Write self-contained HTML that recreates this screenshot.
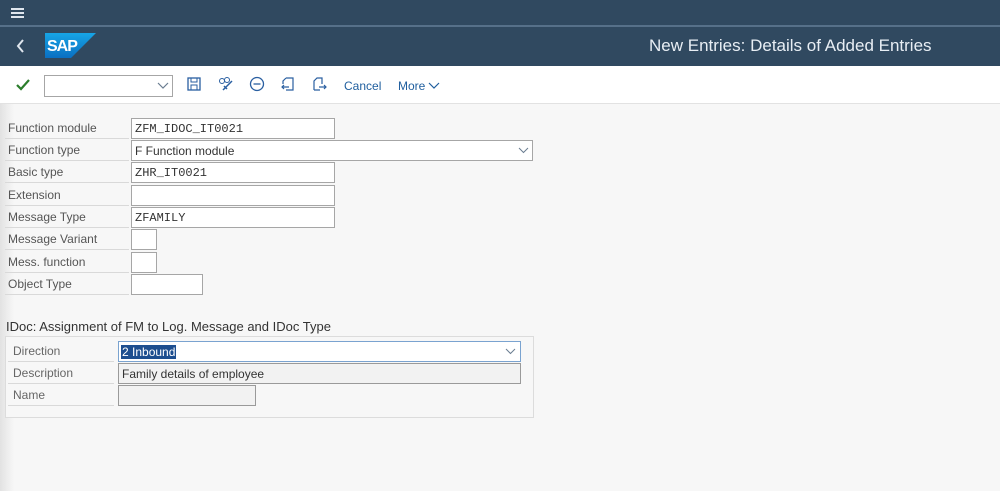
<!DOCTYPE html>
<html><head><style>
*{margin:0;padding:0;box-sizing:border-box}
body{width:1000px;height:491px;overflow:hidden;background:#f7f7f7;font-family:"Liberation Sans",sans-serif;position:relative}
.a{position:absolute}
.lbl{position:absolute;left:5px;width:124px;height:21px;border-bottom:1px solid #d9d9d9;font-size:12px;color:#555;padding:3px 0 0 3px}
.inp{position:absolute;height:21px;background:#fff;border:1px solid #a6a6a6;font-size:12px;color:#333;padding:3px 0 0 3px}
.mono{font-family:"Liberation Mono",monospace;font-size:12px}
.ic{position:absolute;top:76px}
.g{position:absolute;left:8px;width:106px;height:21px;border-bottom:1px solid #d9d9d9;font-size:12px;color:#666;padding:3px 0 0 5px}
</style></head><body>
<div class="a" style="left:0;top:0;width:1000px;height:66px;background:#304960"></div>
<div class="a" style="left:0;top:25px;width:1000px;height:2px;background:#567089"></div>
<div class="a" style="left:11px;top:8px;width:13px;height:2px;background:#dfe6ee;box-shadow:0 4px 0 #dfe6ee,0 8px 0 #dfe6ee"></div>
<svg class="a" style="left:15px;top:38px" width="10" height="16"><path d="M8 2 L3 8 L8 14" stroke="#dfe6ee" stroke-width="2" fill="none"/></svg>
<svg class="a" style="left:45px;top:33px" width="51" height="25"><defs><linearGradient id="s" x1="0" y1="0" x2="0" y2="1"><stop offset="0" stop-color="#17a5e6"/><stop offset="1" stop-color="#0a6fc2"/></linearGradient></defs><path d="M0 0 H51 L26 25 H0 Z" fill="url(#s)"/><text x="2" y="18" font-family="Liberation Sans" font-weight="bold" font-size="16" fill="#fff" letter-spacing="-1">SAP</text></svg>
<div class="a" style="left:649px;top:36px;font-size:17px;color:#e8eef4">New Entries: Details of Added Entries</div>
<div class="a" style="left:0;top:66px;width:1000px;height:38px;background:#fff;border-bottom:1px solid #e2e2e2"></div>
<svg class="a" style="left:16px;top:79px" width="14" height="12"><path d="M1 6 L5 10 L13 1" stroke="#2b7d2b" stroke-width="2.2" fill="none"/></svg>
<div class="a" style="left:44px;top:75px;width:129px;height:22px;border:1px solid #a6a6a6;background:#fff"></div>
<svg class="a" style="left:157px;top:82px" width="12" height="8"><path d="M1 1 L6 6 L11 1" stroke="#6a7d91" stroke-width="1.2" fill="none"/></svg>
<svg class="ic" style="left:187px" width="14" height="16"><rect x="1" y="2" width="12" height="12" stroke="#2a5fa1" fill="none" stroke-width="1.3"/><rect x="4" y="2" width="6" height="4" stroke="#2a5fa1" fill="none"/><rect x="4" y="9" width="6" height="5" stroke="#2a5fa1" fill="none"/></svg>
<svg class="ic" style="left:218px" width="16" height="16"><circle cx="4" cy="5" r="2.5" stroke="#2a5fa1" fill="none"/><circle cx="9" cy="4" r="2.5" stroke="#2a5fa1" fill="none"/><path d="M5 14 L14 5 M6 10 L9 13" stroke="#2a5fa1" stroke-width="1.5"/></svg>
<svg class="ic" style="left:249px" width="16" height="16"><circle cx="8" cy="8" r="6.5" stroke="#2a5fa1" fill="none" stroke-width="1.3"/><path d="M4.5 8 H11.5" stroke="#2a5fa1" stroke-width="1.3"/></svg>
<svg class="ic" style="left:280px" width="16" height="16"><path d="M6 2 H13 V14 H6 M6 2 L3 5 V8" stroke="#2a5fa1" fill="none" stroke-width="1.2"/><path d="M9 11 H2 M4 9 L2 11 L4 13" stroke="#2a5fa1" fill="none" stroke-width="1.2"/></svg>
<svg class="ic" style="left:311px" width="16" height="16"><path d="M3 14 V5 L6 2 H11 V8 M3 14 H9" stroke="#2a5fa1" fill="none" stroke-width="1.2"/><path d="M8 11 H15 M13 9 L15 11 L13 13" stroke="#2a5fa1" fill="none" stroke-width="1.2"/></svg>
<div class="a" style="left:344px;top:79px;font-size:12px;color:#1f5e9e">Cancel</div>
<div class="a" style="left:398px;top:79px;font-size:12px;color:#1f5e9e">More</div>
<svg class="a" style="left:428px;top:82px" width="12" height="8"><path d="M1 1 L6 6 L11 1" stroke="#1f5e9e" stroke-width="1.2" fill="none"/></svg>
<div class="a" style="left:0;top:104px;width:14px;height:387px;background:linear-gradient(90deg,#e2e2e2,#f7f7f7)"></div>

<div class="lbl" style="top:118px">Function module</div><div class="inp mono" style="left:131px;top:118px;width:204px">ZFM_IDOC_IT0021</div>
<div class="lbl" style="top:140px">Function type</div><div class="inp" style="left:131px;top:140px;width:402px">F Function module</div>
<svg class="a" style="left:518px;top:147px" width="11" height="7"><path d="M1 1 L5.5 5.5 L10 1" stroke="#6a7d91" fill="none"/></svg>
<div class="lbl" style="top:162px">Basic type</div><div class="inp mono" style="left:131px;top:162px;width:204px">ZHR_IT0021</div>
<div class="lbl" style="top:185px">Extension</div><div class="inp" style="left:131px;top:185px;width:204px"></div>
<div class="lbl" style="top:207px">Message Type</div><div class="inp mono" style="left:131px;top:207px;width:204px">ZFAMILY</div>
<div class="lbl" style="top:229px">Message Variant</div><div class="inp" style="left:131px;top:229px;width:26px"></div>
<div class="lbl" style="top:252px">Mess. function</div><div class="inp" style="left:131px;top:252px;width:26px"></div>
<div class="lbl" style="top:274px">Object Type</div><div class="inp" style="left:131px;top:274px;width:72px"></div>

<div class="a" style="left:6px;top:319px;font-size:13px;color:#333">IDoc: Assignment of FM to Log. Message and IDoc Type</div>
<div class="a" style="left:5px;top:336px;width:529px;height:82px;border:1px solid #dcdcdc;background:#f7f7f7"></div>
<div class="g" style="top:341px">Direction</div>
<div class="inp" style="left:118px;top:341px;width:403px;border:1px solid #7aa3d0;padding:3px 0 0 2px"><span style="background:#1d4e8f;color:#fff;padding:0 1px">2 Inbound</span></div>
<svg class="a" style="left:505px;top:348px" width="11" height="7"><path d="M1 1 L5.5 5.5 L10 1" stroke="#6a7d91" fill="none"/></svg>
<div class="g" style="top:363px">Description</div>
<div class="inp" style="left:118px;top:363px;width:403px;background:#f2f2f2;border-color:#9a9a9a">Family details of employee</div>
<div class="g" style="top:385px">Name</div>
<div class="inp" style="left:118px;top:385px;width:138px;background:#f2f2f2;border-color:#9a9a9a"></div>
</body></html>
